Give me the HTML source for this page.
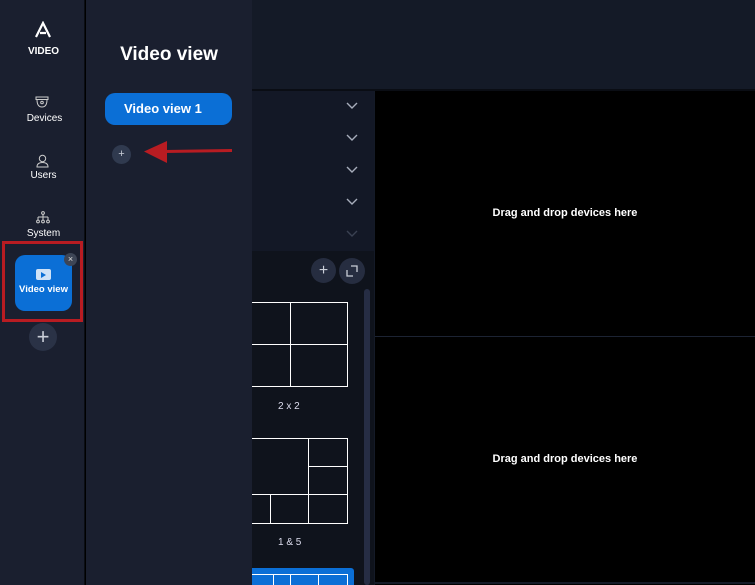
<!DOCTYPE html>
<html><head><style>
*{margin:0;padding:0;box-sizing:border-box}
body{width:755px;height:585px;overflow:hidden;background:#000;font-family:"Liberation Sans",sans-serif;position:relative}
.a{position:absolute}
.nav{left:0;top:0;width:85px;height:585px;background:#1a1f2f;border-right:1px solid #0a0d14}
.lbl{color:#fff;font-size:10px;text-align:center;width:85px;left:0}
.chev{left:346px;width:12px;height:8px}
</style></head><body>
<div class="a nav"></div>
<svg class="a" style="left:34px;top:21px" width="18" height="17" viewBox="0 0 18 17"><path d="M2 16 L9 2 L16 16 M6 12 H12" fill="none" stroke="#fff" stroke-width="2.2"/></svg>
<div class="a lbl" style="top:46px;font-weight:bold;font-size:10px;left:1px">VIDEO</div>
<svg class="a" style="left:35px;top:96px" width="14" height="12" viewBox="0 0 14 12"><rect x="1" y="1" width="12" height="2.5" fill="none" stroke="#ccc"/><path d="M2 3.5 Q2 11 7 11 Q12 11 12 3.5" fill="none" stroke="#ccc"/><circle cx="7" cy="6.5" r="1.3" fill="none" stroke="#ccc"/></svg>
<div class="a lbl" style="top:113px;left:2px">Devices</div>
<svg class="a" style="left:36px;top:154px" width="13" height="14" viewBox="0 0 13 14"><circle cx="6.5" cy="4.5" r="3.2" fill="none" stroke="#ccc"/><path d="M1 13 Q1 8.5 6.5 8.5 Q12 8.5 12 13 Z" fill="none" stroke="#ccc"/></svg>
<div class="a lbl" style="top:170px;left:1px">Users</div>
<svg class="a" style="left:36px;top:211px" width="14" height="13" viewBox="0 0 14 13"><circle cx="7" cy="2" r="1.4" fill="none" stroke="#ccc"/><path d="M7 3.5V6 M2 6H12 M2 6V9 M7 6V9 M12 6V9" stroke="#ccc" fill="none"/><circle cx="2" cy="10.5" r="1.4" fill="none" stroke="#ccc"/><circle cx="7" cy="10.5" r="1.4" fill="none" stroke="#ccc"/><circle cx="12" cy="10.5" r="1.4" fill="none" stroke="#ccc"/></svg>
<div class="a lbl" style="top:228px;left:1px">System</div>
<div class="a" style="left:2px;top:241px;width:81px;height:81px;border:3px solid #b81c22"></div>
<div class="a" style="left:15px;top:255px;width:57px;height:56px;background:#0b6fd6;border-radius:10px"></div>
<div class="a" style="left:36px;top:269px;width:15px;height:11px;background:#cfe2f7;border-radius:2px"></div>
<div class="a" style="left:41px;top:272px;width:0;height:0;border-left:5px solid #0b6fd6;border-top:3px solid transparent;border-bottom:3px solid transparent"></div>
<div class="a lbl" style="top:284px;font-weight:bold;font-size:9.5px;left:1px">Video view</div>
<div class="a" style="left:64px;top:253px;width:13px;height:13px;border-radius:50%;background:#3d4556;color:#ddd;font-size:9px;line-height:13px;text-align:center">×</div>
<div class="a" style="left:29px;top:323px;width:28px;height:28px;border-radius:50%;background:#2a3246;color:#c9ced8;font-size:22px;line-height:27px;text-align:center;font-weight:300">+</div>

<div class="a" style="left:86px;top:0;width:166px;height:585px;background:#1a1f2f"></div>
<div class="a" style="left:86px;top:44px;width:166px;text-align:center;color:#fff;font-weight:bold;font-size:19px">Video view</div>
<div class="a" style="left:105px;top:93px;width:127px;height:32px;background:#0b6fd6;border-radius:10px;color:#fff;font-weight:bold;font-size:13px;line-height:31px;padding-left:19px">Video view 1</div>
<div class="a" style="left:112px;top:145px;width:19px;height:19px;border-radius:50%;background:#303a4f;color:#c9ced8;font-size:11px;line-height:19px;text-align:center">+</div>
<svg class="a" style="left:144px;top:139px" width="90" height="26" viewBox="0 0 90 26"><path d="M88 11.5 L20 12.5" stroke="#b81c22" stroke-width="3"/><path d="M0 12.5 L23 2 L23 24 Z" fill="#b81c22"/></svg>

<div class="a" style="left:252px;top:0;width:503px;height:89px;background:#141a27"></div>
<div class="a" style="left:252px;top:89px;width:503px;height:2px;background:#0a0d14"></div>
<div class="a" style="left:252px;top:91px;width:122px;height:160px;background:#131826"></div>
<div class="a" style="left:252px;top:251px;width:122px;height:334px;background:#0f131c"></div>
<svg class="a chev" style="top:102px" viewBox="0 0 12 8"><path d="M1 1 L6 6 L11 1" fill="none" stroke="#a7adbb" stroke-width="1.4"/></svg>
<svg class="a chev" style="top:134px" viewBox="0 0 12 8"><path d="M1 1 L6 6 L11 1" fill="none" stroke="#a7adbb" stroke-width="1.4"/></svg>
<svg class="a chev" style="top:166px" viewBox="0 0 12 8"><path d="M1 1 L6 6 L11 1" fill="none" stroke="#a7adbb" stroke-width="1.4"/></svg>
<svg class="a chev" style="top:198px" viewBox="0 0 12 8"><path d="M1 1 L6 6 L11 1" fill="none" stroke="#a7adbb" stroke-width="1.4"/></svg>
<svg class="a chev" style="top:230px" viewBox="0 0 12 8"><path d="M1 1 L6 6 L11 1" fill="none" stroke="#3a4152" stroke-width="1.4"/></svg>
<div class="a" style="left:311px;top:258px;width:25px;height:25px;border-radius:50%;background:#262d40;color:#c9ced8;font-size:16px;line-height:25px;text-align:center">+</div>
<div class="a" style="left:339px;top:258px;width:26px;height:26px;border-radius:50%;background:#262d40"></div>
<svg class="a" style="left:345px;top:264px" width="14" height="14" viewBox="0 0 14 14"><path d="M6 2H12V8 M2 6V12H8" fill="none" stroke="#c9ced8" stroke-width="1.3"/></svg>
<div class="a" style="left:364px;top:289px;width:6px;height:296px;background:#262d44;border-radius:3px"></div>
<div class="a" style="left:252px;top:302px;width:96px;height:85px;border:1px solid #fff;border-left:none"></div>
<div class="a" style="left:290px;top:302px;width:1px;height:85px;background:#fff"></div>
<div class="a" style="left:252px;top:344px;width:96px;height:1px;background:#fff"></div>
<div class="a" style="left:278px;top:401px;color:#dde;font-size:10px">2 x 2</div>
<div class="a" style="left:252px;top:438px;width:96px;height:86px;border:1px solid #fff;border-left:none"></div>
<div class="a" style="left:308px;top:438px;width:1px;height:86px;background:#fff"></div>
<div class="a" style="left:252px;top:494px;width:96px;height:1px;background:#fff"></div>
<div class="a" style="left:308px;top:466px;width:40px;height:1px;background:#fff"></div>
<div class="a" style="left:270px;top:494px;width:1px;height:30px;background:#fff"></div>
<div class="a" style="left:278px;top:537px;color:#dde;font-size:10px">1 &amp; 5</div>
<div class="a" style="left:252px;top:568px;width:102px;height:17px;background:#0b6fd6;border-radius:0 3px 0 0"></div>
<div class="a" style="left:252px;top:574px;width:96px;height:11px;border:1px solid #fff;border-left:none;border-bottom:none"></div>
<div class="a" style="left:273px;top:574px;width:1px;height:11px;background:#fff"></div>
<div class="a" style="left:290px;top:574px;width:1px;height:11px;background:#fff"></div>
<div class="a" style="left:318px;top:574px;width:1px;height:11px;background:#fff"></div>

<div class="a" style="left:374px;top:91px;width:1px;height:494px;background:#141a27"></div>
<div class="a" style="left:375px;top:336px;width:380px;height:1px;background:#1c2333"></div>
<div class="a" style="left:375px;top:582px;width:380px;height:2px;background:#141a27"></div>
<div class="a" style="left:375px;top:207px;width:380px;text-align:center;color:#fff;font-weight:bold;font-size:11px">Drag and drop devices here</div>
<div class="a" style="left:375px;top:453px;width:380px;text-align:center;color:#fff;font-weight:bold;font-size:11px">Drag and drop devices here</div>
</body></html>
